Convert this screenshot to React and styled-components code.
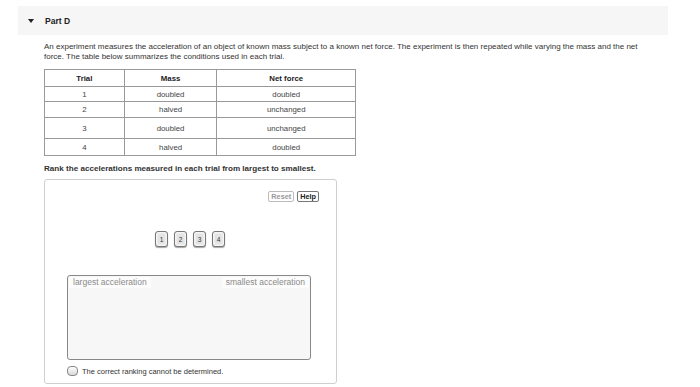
import React from 'react';
import styled, { createGlobalStyle } from 'styled-components';

const GlobalStyle = createGlobalStyle`
  html, body {
    margin: 0;
    padding: 0;
    background: #ffffff;
  }
  body {
    font-family: 'Liberation Sans', Arial, sans-serif;
    color: #333333;
  }
`;

const Page = styled.div`
  width: 700px;
  height: 387px;
  padding-top: 6px;
  box-sizing: border-box;
  overflow: hidden;
`;

const PartHeader = styled.div`
  display: flex;
  align-items: center;
  margin-left: 18px;
  width: 650px;
  height: 29px;
  background: #f6f6f6;
  font-size: 8.5px;
  font-weight: 700;
  color: #222222;
`;

const Caret = styled.span`
  width: 0;
  height: 0;
  margin-left: 10px;
  margin-right: 11px;
  border-left: 3px solid transparent;
  border-right: 3px solid transparent;
  border-top: 4px solid #222222;
`;

const Content = styled.div`
  padding-left: 44px;
  padding-top: 7px;
`;

const Intro = styled.p`
  margin: 0;
  width: 615px;
  font-size: 8px;
  line-height: 10px;
  color: #333333;
`;

const Table = styled.table`
  margin-top: 7px;
  border-collapse: collapse;
  width: 312px;
  font-size: 7.8px;
  color: #444444;
  text-align: center;
  th, td {
    border: 1px solid #999999;
    padding: 0;
  }
  th {
    font-weight: 700;
    color: #222222;
  }
`;

const Row = styled.tr`
  height: ${({ h }) => h}px;
`;

const Prompt = styled.div`
  margin-top: 8px;
  font-size: 8.1px;
  font-weight: 700;
  color: #333333;
`;

const Card = styled.div`
  margin-top: 6px;
  width: 293px;
  height: 205px;
  box-sizing: border-box;
  border: 1px solid #cfcfcf;
  border-radius: 3px;
  position: relative;
`;

const Toolbar = styled.div`
  display: flex;
  justify-content: flex-end;
  gap: 3px;
  padding: 11px 17px 0 0;
`;

const ToolButton = styled.div`
  height: 11px;
  padding: 0 2px;
  box-sizing: border-box;
  border: 1px solid ${({ muted }) => (muted ? '#bbbbbb' : '#777777')};
  border-radius: 2px;
  font-size: 7.3px;
  line-height: 9px;
  font-weight: 700;
  color: ${({ muted }) => (muted ? '#999999' : '#222222')};
  background: #ffffff;
`;

const Tiles = styled.div`
  display: flex;
  gap: 6px;
  margin-top: 29px;
  margin-left: 110px;
`;

const Tile = styled.div`
  width: 13px;
  height: 16px;
  box-sizing: border-box;
  border: 1px solid #777777;
  border-radius: 3px;
  background: #e4e4e4;
  box-shadow: 0 1px 1px rgba(0, 0, 0, 0.35), inset 0 0 0 1.5px #f4f4f4;
  display: flex;
  align-items: center;
  justify-content: center;
  font-size: 6.6px;
  color: #333333;
`;

const Ranking = styled.div`
  margin: 28px 0 0 22px;
  width: 244px;
  height: 85px;
  box-sizing: border-box;
  border: 1px solid #888888;
  border-radius: 3px;
  background: #f7f7f7;
  display: flex;
  justify-content: space-between;
  align-items: flex-start;
  padding: 1px 1px 0 1px;
`;

const RankLabel = styled.span`
  background: #fcfcfc;
  padding: 0 4px;
  font-size: 8.5px;
  line-height: 11px;
  color: #8a8a8a;
`;

const CheckRow = styled.label`
  display: flex;
  align-items: center;
  gap: 4px;
  margin: 6px 0 0 22px;
  font-size: 7.5px;
  color: #333333;
`;

const Check = styled.span`
  width: 11px;
  height: 10px;
  box-sizing: border-box;
  border: 1px solid #888888;
  border-radius: 4px;
  background: linear-gradient(#ffffff, #d8d8d8);
`;

const rows = [
  { trial: '1', mass: 'doubled', force: 'doubled', h: 15 },
  { trial: '2', mass: 'halved', force: 'unchanged', h: 16 },
  { trial: '3', mass: 'doubled', force: 'unchanged', h: 21 },
  { trial: '4', mass: 'halved', force: 'doubled', h: 17 },
];

export default function App() {
  return (
    <Page>
      <GlobalStyle />
      <PartHeader>
        <Caret />
        Part D
      </PartHeader>
      <Content>
        <Intro>
          An experiment measures the acceleration of an object of known mass subject to a known net force. The
          experiment is then repeated while varying the mass and the net force. The table below summarizes the
          conditions used in each trial.
        </Intro>
        <Table>
          <colgroup>
            <col style={{ width: 80 }} />
            <col style={{ width: 93 }} />
            <col style={{ width: 139 }} />
          </colgroup>
          <thead>
            <Row h={17}>
              <th>Trial</th>
              <th>Mass</th>
              <th>Net force</th>
            </Row>
          </thead>
          <tbody>
            {rows.map((r) => (
              <Row key={r.trial} h={r.h}>
                <td>{r.trial}</td>
                <td>{r.mass}</td>
                <td>{r.force}</td>
              </Row>
            ))}
          </tbody>
        </Table>
        <Prompt>Rank the accelerations measured in each trial from largest to smallest.</Prompt>
        <Card>
          <Toolbar>
            <ToolButton muted>Reset</ToolButton>
            <ToolButton>Help</ToolButton>
          </Toolbar>
          <Tiles>
            {['1', '2', '3', '4'].map((n) => (
              <Tile key={n}>{n}</Tile>
            ))}
          </Tiles>
          <Ranking>
            <RankLabel>largest acceleration</RankLabel>
            <RankLabel>smallest acceleration</RankLabel>
          </Ranking>
          <CheckRow>
            <Check />
            The correct ranking cannot be determined.
          </CheckRow>
        </Card>
      </Content>
    </Page>
  );
}
